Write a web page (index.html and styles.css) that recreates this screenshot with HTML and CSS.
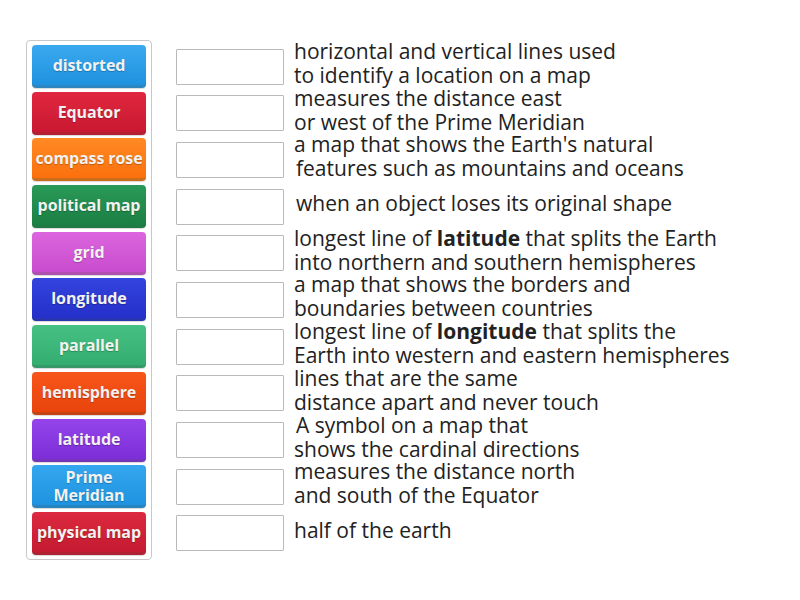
FILE: index.html
```html
<!DOCTYPE html>
<html>
<head>
<meta charset="utf-8">
<link rel="stylesheet" href="styles.css">
</head>
<body>
<div class="game">
  <div class="bank">
    <div class="tile c1">distorted</div>
    <div class="tile c2">Equator</div>
    <div class="tile c3">compass rose</div>
    <div class="tile c4">political map</div>
    <div class="tile c5">grid</div>
    <div class="tile c6">longitude</div>
    <div class="tile c7">parallel</div>
    <div class="tile c8">hemisphere</div>
    <div class="tile c9">latitude</div>
    <div class="tile c10 two">Prime<br>Meridian</div>
    <div class="tile c11">physical map</div>
  </div>
  <div class="rows">
    <div class="row"><div class="slot"></div><div class="def">horizontal and vertical lines used<br>to identify a location on a map</div></div>
    <div class="row"><div class="slot"></div><div class="def">measures the distance east<br>or west of the Prime Meridian</div></div>
    <div class="row"><div class="slot"></div><div class="def">a map that shows the Earth's natural<br><span class="ind">features such as mountains and oceans</span></div></div>
    <div class="row"><div class="slot"></div><div class="def"><span class="ind">when an object loses its original shape</span></div></div>
    <div class="row"><div class="slot"></div><div class="def">longest line of <b>latitude</b> that splits the Earth<br>into northern and southern hemispheres</div></div>
    <div class="row"><div class="slot"></div><div class="def">a map that shows the borders and<br>boundaries between countries</div></div>
    <div class="row"><div class="slot"></div><div class="def">longest line of <b>longitude</b> that splits the<br>Earth into western and eastern hemispheres</div></div>
    <div class="row"><div class="slot"></div><div class="def">lines that are the same<br>distance apart and never touch</div></div>
    <div class="row"><div class="slot"></div><div class="def"><span class="ind">A symbol on a map that</span><br>shows the cardinal directions</div></div>
    <div class="row"><div class="slot"></div><div class="def">measures the distance north<br>and south of the Equator</div></div>
    <div class="row"><div class="slot"></div><div class="def">half of the earth</div></div>
  </div>
</div>
</body>
</html>
```

FILE: styles.css
```css
html, body {
  margin: 0;
  padding: 0;
  background: #ffffff;
  font-family: "Open Sans", "Noto Sans", sans-serif;
}

.game {
  display: flex;
  align-items: flex-start;
  padding: 40px 0 0 26px;
}

.bank {
  width: 114px;
  padding: 4px 5px;
  border: 1px solid #c8c8c8;
  border-radius: 4px;
  display: flex;
  flex-direction: column;
  gap: 3.7px;
}

.tile {
  height: 43px;
  box-sizing: border-box;
  border-radius: 4px;
  display: flex;
  align-items: center;
  justify-content: center;
  text-align: center;
  color: #f2f2f0;
  font-weight: 700;
  font-size: 16px;
  line-height: 18px;
  letter-spacing: -0.1px;
  white-space: nowrap;
  text-shadow: 0 1px 1px rgba(0,0,0,0.25);
  border-bottom: 3px solid rgba(0,0,0,0.2);
  box-shadow: 0 1px 1px rgba(0,0,0,0.15);
}

.tile.two { line-height: 18px; padding-top: 1px; }

.c1 { background: linear-gradient(#3aa9ef, #1f92df); }
.c2 { background: linear-gradient(#e0283f, #c91832); }
.c3 { background: linear-gradient(#ff8a24, #fb700d); }
.c4 { background: linear-gradient(#2a9a58, #1b7f44); }
.c5 { background: linear-gradient(#dc66de, #c94ccf); }
.c6 { background: linear-gradient(#3444de, #2430c8); }
.c7 { background: linear-gradient(#46c084, #33ae70); }
.c8 { background: linear-gradient(#f7561a, #e8440c); }
.c9 { background: linear-gradient(#9444ea, #7d2ed8); }
.c10 { background: linear-gradient(#35a7ef, #1f93e0); }
.c11 { background: linear-gradient(#dc2a40, #c41a31); }

.rows {
  margin-left: 24px;
  padding-top: 5px;
  display: flex;
  flex-direction: column;
  gap: 3.7px;
}

.row {
  height: 43px;
  display: flex;
  align-items: center;
}

.slot {
  width: 108px;
  height: 36px;
  box-sizing: border-box;
  border: 1px solid #b9b9b9;
  border-radius: 1px;
  background: #ffffff;
  flex: none;
}

.def {
  margin-left: 10px;
  margin-top: -7px;
  font-size: 21px;
  line-height: 24px;
  color: #222222;
  white-space: nowrap;
}

.ind { margin-left: 2px; }

.def b { font-weight: 700; }
```
